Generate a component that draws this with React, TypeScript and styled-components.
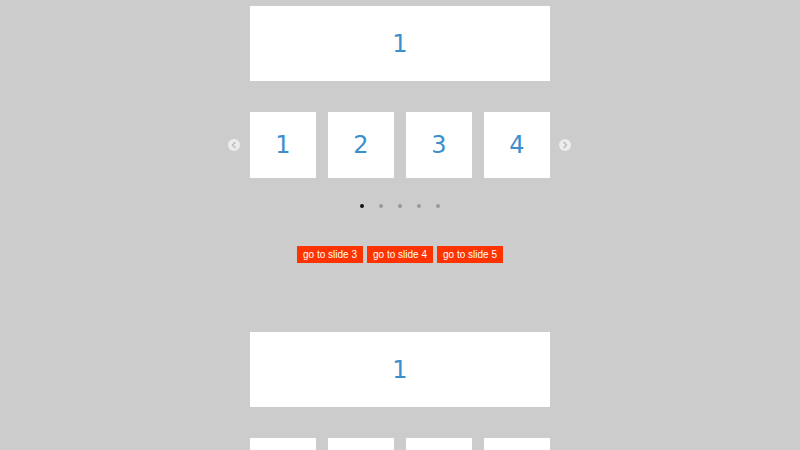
import styled, { createGlobalStyle } from 'styled-components';

const GlobalStyle = createGlobalStyle`
html, body {
  margin: 0;
  padding: 0;
  background: #cccccc;
}
body {
  font-family: "DejaVu Sans", sans-serif;
}
`;

const Page = styled.div`
display: flex;
flex-direction: column;
align-items: center;
padding-top: 6px;
`;

const Gallery = styled.section`
width: 300px;
display: flex;
flex-direction: column;
margin-bottom: 69px;
`;

const MainSlide = styled.div`
height: 75px;
background: #ffffff;
display: flex;
align-items: center;
justify-content: center;
color: #3a8fcc;
font-size: 24px;
`;

const ThumbsWrap = styled.div`
position: relative;
margin-top: 31px;
`;

const ThumbsRow = styled.div`
display: grid;
grid-template-columns: repeat(4, 66px);
gap: 12px;
`;

const Thumb = styled.div`
height: 66px;
background: #ffffff;
display: flex;
align-items: center;
justify-content: center;
color: #3a8fcc;
font-size: 24px;
`;

const Arrow = styled.div<{ side: 'left' | 'right' }>`
position: absolute;
top: 27px;
${(p) => (p.side === 'left' ? 'left: -22px;' : 'right: -21px;')}
width: 12px;
height: 12px;
border-radius: 50%;
background: #ececec;
display: flex;
align-items: center;
justify-content: center;
`;

const Dots = styled.div`
display: flex;
justify-content: center;
gap: 15px;
margin-top: 26px;
`;

const Dot = styled.span<{ active: boolean }>`
width: 4px;
height: 4px;
border-radius: 50%;
background: ${(p) => (p.active ? '#111111' : '#999999')};
`;

const Buttons = styled.div`
display: flex;
justify-content: center;
gap: 4px;
margin-top: 38px;
`;

const GoButton = styled.button`
height: 17px;
width: 66px;
padding: 0;
border: none;
background: #ff3300;
color: #ffffff;
font-family: "Liberation Sans", Arial, sans-serif;
font-size: 10px;
line-height: 17px;
cursor: pointer;
`;

const Chevron = ({ dir }: { dir: 'left' | 'right' }) => (
  <svg width="8" height="8" viewBox="0 0 8 8">
    <path
      d={dir === 'left' ? 'M5 1.5 L2.5 4 L5 6.5' : 'M3 1.5 L5.5 4 L3 6.5'}
      fill="none"
      stroke="#bdbdbd"
      strokeWidth="1.6"
      strokeLinecap="round"
      strokeLinejoin="round"
    />
  </svg>
);

const SwiperGallery = ({ withButtons }: { withButtons: boolean }) => (
  <Gallery>
    <MainSlide>1</MainSlide>
    <ThumbsWrap>
      <ThumbsRow>
        {[1, 2, 3, 4].map((n) => (
          <Thumb key={n}>{n}</Thumb>
        ))}
      </ThumbsRow>
      <Arrow side="left">
        <Chevron dir="left" />
      </Arrow>
      <Arrow side="right">
        <Chevron dir="right" />
      </Arrow>
    </ThumbsWrap>
    <Dots>
      {[0, 1, 2, 3, 4].map((i) => (
        <Dot key={i} active={i === 0} />
      ))}
    </Dots>
    {withButtons && (
      <Buttons>
        <GoButton>go to slide 3</GoButton>
        <GoButton>go to slide 4</GoButton>
        <GoButton>go to slide 5</GoButton>
      </Buttons>
    )}
  </Gallery>
);

export default function App() {
  return (
    <Page>
      <GlobalStyle />
      <SwiperGallery withButtons />
      <SwiperGallery withButtons />
    </Page>
  );
}
